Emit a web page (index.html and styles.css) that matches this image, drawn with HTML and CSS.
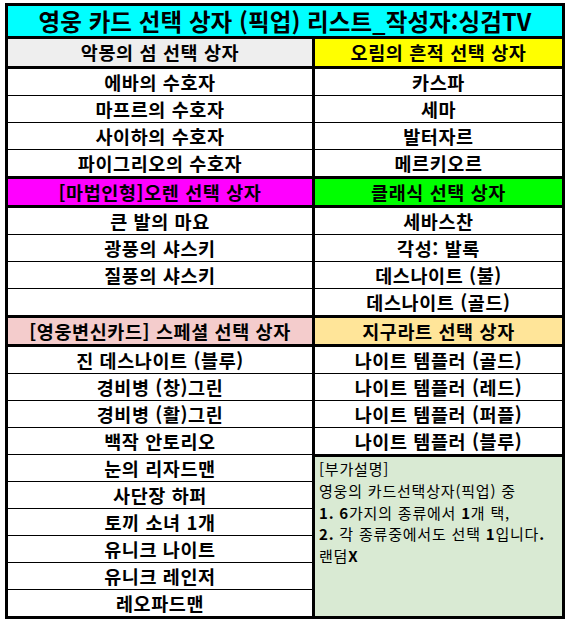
FILE: index.html
```html
<!DOCTYPE html>
<html lang="ko">
<head>
<meta charset="utf-8">
<title>영웅 카드 선택 상자 (픽업) 리스트</title>
<link rel="stylesheet" href="styles.css">
</head>
<body>
<div class="sheet">
  <div class="title">영웅 카드 선택 상자 (픽업) 리스트_작성자:싱검TV</div>

  <div class="band band-head first">
    <div class="head gray">악몽의 섬 선택 상자</div>
    <div class="head yellow">오림의 흔적 선택 상자</div>
  </div>
  <div class="band">
    <div class="list">
      <div class="cell">에바의 수호자</div>
      <div class="cell">마프르의 수호자</div>
      <div class="cell">사이하의 수호자</div>
      <div class="cell">파이그리오의 수호자</div>
    </div>
    <div class="list">
      <div class="cell">카스파</div>
      <div class="cell">세마</div>
      <div class="cell">발터자르</div>
      <div class="cell">메르키오르</div>
    </div>
  </div>

  <div class="band band-head">
    <div class="head magenta">[마법인형]오렌 선택 상자</div>
    <div class="head green">클래식 선택 상자</div>
  </div>
  <div class="band">
    <div class="list">
      <div class="cell">큰 발의 마요</div>
      <div class="cell">광풍의 샤스키</div>
      <div class="cell">질풍의 샤스키</div>
      <div class="cell"></div>
    </div>
    <div class="list">
      <div class="cell">세바스찬</div>
      <div class="cell">각성: 발록</div>
      <div class="cell">데스나이트 (불)</div>
      <div class="cell">데스나이트 (골드)</div>
    </div>
  </div>

  <div class="band band-head">
    <div class="head pink">[영웅변신카드] 스페셜 선택 상자</div>
    <div class="head orange">지구라트 선택 상자</div>
  </div>
  <div class="band">
    <div class="list">
      <div class="cell">진 데스나이트 (블루)</div>
      <div class="cell">경비병 (창)그린</div>
      <div class="cell">경비병 (활)그린</div>
      <div class="cell">백작 안토리오</div>
      <div class="cell">눈의 리자드맨</div>
      <div class="cell">사단장 하퍼</div>
      <div class="cell">토끼 소녀 1개</div>
      <div class="cell">유니크 나이트</div>
      <div class="cell">유니크 레인저</div>
      <div class="cell">레오파드맨</div>
    </div>
    <div class="stack">
      <div class="list">
        <div class="cell">나이트 템플러 (골드)</div>
        <div class="cell">나이트 템플러 (레드)</div>
        <div class="cell">나이트 템플러 (퍼플)</div>
        <div class="cell">나이트 템플러 (블루)</div>
      </div>
      <div class="note">
        <div>[부가설명]</div>
        <div>영웅의 카드선택상자(픽업) 중</div>
        <div><b>1. 6</b>가지의 종류에서 <b>1</b>개 택,</div>
        <div><b>2.</b> 각 종류중에서도 선택 <b>1</b>입니다<b>.</b></div>
        <div>랜덤<b>X</b></div>
      </div>
    </div>
  </div>
</div>
</body>
</html>
```
FILE: styles.css
```css
html, body {
  margin: 0;
  padding: 0;
  background: #ffffff;
}

body {
  font-family: "Noto Sans CJK KR", "Noto Sans", sans-serif;
  color: #000;
}

.sheet {
  margin: 3px 0 0 5px;
  width: 554px;
  border: 3px solid #000;
  background: #000;
  display: flex;
  flex-direction: column;
  gap: 3px;
}

.title {
  height: 30px;
  line-height: 30px;
  background: #00ffff;
  text-align: center;
  font-weight: 700;
  font-size: 23.5px;
  letter-spacing: 0.1px;
}

.band {
  display: grid;
  grid-template-columns: 304px 247px;
  column-gap: 3px;
}

.head {
  height: 26px;
  line-height: 26px;
  text-align: center;
  font-weight: 700;
  font-size: 18.5px;
  letter-spacing: 0.6px;
}

.band-head.first .head {
  height: 27px;
  line-height: 27px;
}

.gray { background: #eeeeee; }
.yellow { background: #ffff00; }
.magenta { background: #ff00ff; }
.green { background: #00ff00; }
.pink { background: #f4cccc; }
.orange { background: #ffe599; }

.list {
  display: flex;
  flex-direction: column;
  gap: 1px;
}

.cell {
  height: 26px;
  line-height: 26px;
  background: #fff;
  text-align: center;
  font-weight: 700;
  font-size: 18.5px;
  letter-spacing: 0.6px;
}

.stack {
  display: flex;
  flex-direction: column;
  gap: 3px;
}

.note {
  flex: 1;
  background: #d9ead3;
  padding: 1px 3px 0 4px;
  font-size: 15px;
  line-height: 21.8px;
  letter-spacing: 0.8px;
  font-weight: 400;
}

.note b {
  font-weight: 700;
}
```
